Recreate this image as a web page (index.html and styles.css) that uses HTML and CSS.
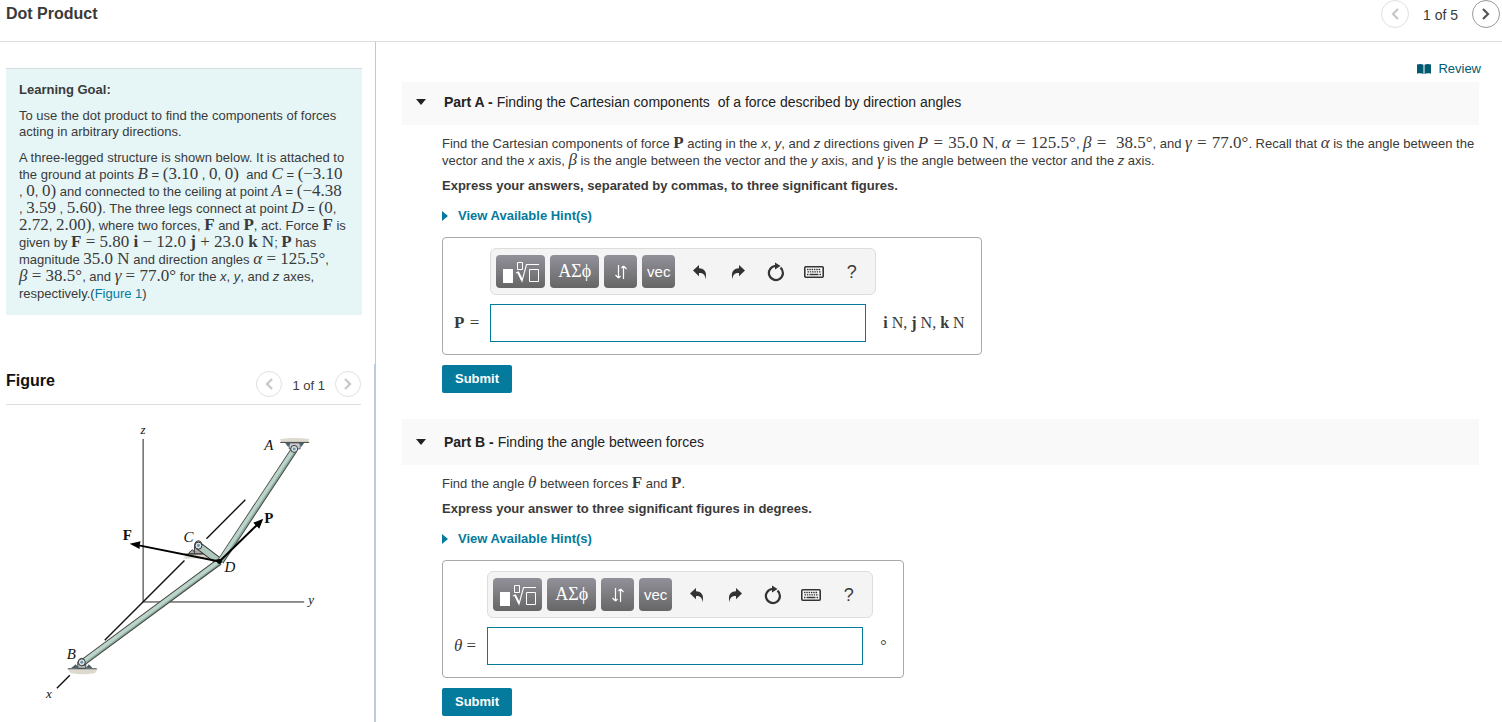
FILE: index.html
```html
<!DOCTYPE html>
<html lang="en">
<head>
<meta charset="utf-8">
<title>Dot Product</title>
<link rel="stylesheet" href="styles.css">
</head>
<body>
<svg class="defs" aria-hidden="true">
  <symbol id="left" viewBox="0 0 10 14"><path d="M8 2 3 7l5 5" fill="none" stroke="currentColor" stroke-width="2.2"/></symbol>
  <symbol id="right" viewBox="0 0 10 14"><path d="m2 2 5 5-5 5" fill="none" stroke="currentColor" stroke-width="2.2"/></symbol>
  <symbol id="root" viewBox="0 0 40 28">
    <rect x="2" y="11" width="10" height="14" fill="#fff"/>
    <path d="M16.500 4.500h5v7h-5zM28.500 11.500h9v12h-9z" fill="none" stroke="#fff"/>
    <path d="M15 15l2-1 4 9L25.500 6.500H38" fill="none" stroke="#fff" stroke-width="1.100"/>
    <path d="M17 14l4 8" stroke="#fff" stroke-width="2"/>
  </symbol>
  <symbol id="arrows" viewBox="0 0 16 16"><path d="M5.500 1v13M2.500 11l3 3M10.500 15V2M10.500 2l3 3M5.500 14l2-2M8.500 4l2-2" fill="none" stroke="#fff" stroke-width="1.200"/></symbol>
  <symbol id="undo" viewBox="0 0 16 16"><path d="M1 6.500 7 1v3.200c5.500.2 8.600 4 6.300 11.300C13.500 10.600 11 8.900 7 9v3.200z" fill="#333"/></symbol>
  <symbol id="redo" viewBox="0 0 16 16"><path d="M15 6.500 9 1v3.200c-5.500.2-8.600 4-6.300 11.300C2.500 10.600 5 8.900 9 9v3.200z" fill="#333"/></symbol>
  <symbol id="reset" viewBox="0 0 18 20"><path d="M13.500 5.700A7 7 0 1 1 8.500 4" fill="none" stroke="#333" stroke-width="2.200"/><path d="M8 .5v7l5.500-3.500z" fill="#333"/></symbol>
  <symbol id="keys" viewBox="0 0 20 12">
    <rect x=".8" y=".8" width="18.400" height="10.400" rx="1" fill="#fff" stroke="#333" stroke-width="1.600"/>
    <path d="M3 3.500h14M3.500 5.800h14" stroke="#333" stroke-width="1.300" stroke-dasharray="1.500 .8"/>
    <path d="M3 8.500h1.500M5.500 8.500h9M15.500 8.500H17" stroke="#333" stroke-width="1.300"/>
  </symbol>
  <symbol id="book" viewBox="0 0 14 10"><path d="M0 .5C2-.2 5-.2 6.500.8V10C5 9.200 2 9.200 0 9.700zM14 .5C12-.2 9-.2 7.500.8V10c1.500-.8 4.500-.8 6.500-.3z" fill="currentColor"/></symbol>
</svg>

<header class="topbar">
  <h1 class="title">Dot Product</h1>
  <nav class="pager" aria-label="Items">
    <button class="round" disabled aria-label="Previous item"><svg><use href="#left"/></svg></button>
    <span class="count">1 of 5</span>
    <button class="round active" aria-label="Next item"><svg><use href="#right"/></svg></button>
  </nav>
</header>

<div class="layout">
  <aside class="side">
    <section class="intro">
      <div class="goal">
        <h2 class="goal-title">Learning Goal:</h2>
        <p class="goal-lead">To use the dot product to find the components of forces acting in arbitrary directions.</p>
        <p class="goal-text">A three-legged structure is shown below. It is attached to<br>
          the ground at points <i class="m">B</i> = <span class="m">(3.10</span> , <span class="m">0</span>, <span class="m">0)</span>&nbsp; and <i class="m">C</i> = <span class="m">(−3.10</span><br>
          , <span class="m">0</span>, <span class="m">0)</span> and connected to the ceiling at point <i class="m">A</i> = <span class="m">(−4.38</span><br>
          , <span class="m">3.59</span> , <span class="m">5.60)</span>. The three legs connect at point <i class="m">D</i> = <span class="m">(0</span>,<br>
          <span class="m">2.72</span>, <span class="m">2.00)</span>, where two forces, <b class="m">F</b> and <b class="m">P</b>, act. Force <b class="m">F</b> is<br>
          given by <span class="m"><b>F</b> <span class="op">=</span> 5.80 <b>i</b> − 12.0 <b>j</b> + 23.0 <b>k</b> N</span>; <b class="m">P</b> has<br>
          magnitude <span class="m">35.0 N</span> and direction angles <span class="m"><i>α</i> <span class="op">=</span> 125.5°</span>,<br>
          <span class="m"><i>β</i> <span class="op">=</span> 38.5°</span>, and <span class="m"><i>γ</i> <span class="op">=</span> 77.0°</span> for the <i>x</i>, <i>y</i>, and <i>z</i> axes,<br>
          respectively.(<a class="link" href="#figure">Figure 1</a>)</p>
      </div>
    </section>
    <section class="figure" id="figure">
      <div class="figure-head">
        <h2 class="figure-title">Figure</h2>
        <nav class="pager" aria-label="Figures">
          <button class="round small" disabled aria-label="Previous figure"><svg><use href="#left"/></svg></button>
          <span class="count">1 of 1</span>
          <button class="round small" disabled aria-label="Next figure"><svg><use href="#right"/></svg></button>
        </nav>
      </div>
      <svg class="drawing" viewBox="0 410 356 300" role="img" aria-label="Three-legged structure with forces F and P at D">
        <g transform="translate(-6 0)">
          <path d="M143.500 438v163.500H305" fill="none" stroke="#222"/>
          <path d="M246 499 207 538M185 560 105 640M70 675 57 688" stroke="#111" stroke-width="1.400"/>
          <path d="M281 438q14-2 29 0l-1 4h-27z" fill="#ddd9ce"/>
          <path d="M281 441.500h29" stroke="#444"/>
          <path d="M290 442h11v6h-11z" fill="#ccc" stroke="#445" stroke-width=".8"/>
          <path d="M286 442l3 4 2-4zM300 442l2 4 3-4z" fill="#47606d"/>
          <path d="M190 550h16l10 8h-32z" fill="#ddd9ce"/>
          <path d="M185 553.500h28" stroke="#444"/>
          <path d="M189 553l4-4 3 4zM195 553v-9q1-4 4-4t4 5v8z" fill="#aaa" stroke="#444"/>
          <path d="M199 545 220 561" stroke="#333" stroke-width="8"/>
          <path d="M199 545 220 561" stroke="#afcabc" stroke-width="6"/>
          <path d="M68 669h30l-3 4q-12 2-24 0z" fill="#ddd9ce"/>
          <path d="M68 668.500h29" stroke="#444"/>
          <path d="M71 668l5-4 3 4zM86 668l3-4 4 4z" fill="#47606d"/>
          <path d="M78 668v-6q1-4 4-4t4 4v6z" fill="#bbb" stroke="#444"/>
          <path d="M82 663 220 561" stroke="#444" stroke-width="7"/>
          <path d="M82 663 220 561" stroke="#8daf9f" stroke-width="5"/>
          <path d="M82 662 219 561" stroke="#bcd4c9" stroke-width="3.500"/>
          <path d="M295 449 221 561" stroke="#444" stroke-width="7"/>
          <path d="M295 449 221 561" stroke="#8daf9f" stroke-width="5"/>
          <path d="M294 449 220 561" stroke="#bcd4c9" stroke-width="3.500"/>
          <g fill="#dce6ea" stroke="#333"><circle cx="199" cy="545" r="3.500"/><circle cx="82" cy="662" r="3.500"/><circle cx="295" cy="448" r="3.500"/></g>
          <g fill="#6a96a8"><circle cx="199" cy="545" r="1.500"/><circle cx="82" cy="662" r="1.500"/><circle cx="295" cy="448" r="1.500"/></g>
          <path d="M220 561 138 544.500M220 561l38-37" stroke="#000" stroke-width="2"/>
          <path d="M130 543l11-2.500-1 4 0 4zM264 518l-4 10-3-3-3-3z" fill="#000"/>
          <circle cx="220" cy="561" r="2.500"/>
          <g class="fig-text">
            <text x="141" y="433" class="axis">z</text><text x="309" y="604" class="axis">y</text><text x="46" y="698" class="axis">x</text>
            <text x="265" y="449">A</text><text x="184" y="541">C</text><text x="225" y="571">D</text><text x="67" y="659">B</text>
            <text x="123" y="539" class="force">F</text><text x="265" y="522" class="force">P</text>
          </g>
        </g>
      </svg>
    </section>
  </aside>

  <main class="content">
    <div class="review"><a href="#review"><svg><use href="#book"/></svg>Review</a></div>

    <section class="part first">
      <h2 class="part-head"><button class="toggle" aria-expanded="true"><span class="caret"></span><span><b>Part A -</b> Finding the Cartesian components&nbsp; of a force described by direction angles</span></button></h2>
      <div class="part-body">
        <p class="question">Find the Cartesian components of force <b class="m">P</b> acting in the <i>x</i>, <i>y</i>, and <i>z</i> directions given <span class="m"><i>P</i> <span class="op">=</span> 35.0 N</span>, <span class="m"><i>α</i> <span class="op">=</span> 125.5°</span>, <span class="m"><i>β</i> <span class="op">=</span>&nbsp; 38.5°</span>, and <span class="m"><i>γ</i> <span class="op">=</span> 77.0°</span>. Recall that <i class="m">α</i> is the angle between the vector and the <i>x</i> axis, <i class="m">β</i> is the angle between the vector and the <i>y</i> axis, and <i class="m">γ</i> is the angle between the vector and the <i>z</i> axis.</p>
        <p class="instruction">Express your answers, separated by commas, to three significant figures.</p>
        <button class="hints"><span class="tri"></span>View Available Hint(s)</button>
        <form class="answer">
          <div class="tools" role="toolbar" aria-label="Equation tools">
            <button type="button" class="key wide" aria-label="Templates"><svg class="i-root"><use href="#root"/></svg></button>
            <button type="button" class="key wide greek">ΑΣϕ</button>
            <button type="button" class="key" aria-label="Subscripts"><svg class="i-arrows"><use href="#arrows"/></svg></button>
            <button type="button" class="key vec">vec</button>
            <button type="button" class="tool" aria-label="Undo"><svg class="i-turn"><use href="#undo"/></svg></button>
            <button type="button" class="tool" aria-label="Redo"><svg class="i-turn"><use href="#redo"/></svg></button>
            <button type="button" class="tool" aria-label="Reset"><svg class="i-reset"><use href="#reset"/></svg></button>
            <button type="button" class="tool" aria-label="Keyboard"><svg class="i-keys"><use href="#keys"/></svg></button>
            <button type="button" class="tool help">?</button>
          </div>
          <label class="lhs" for="ans-a"><b>P</b> <span class="op">=</span></label>
          <input class="field" id="ans-a" type="text">
          <span class="unit"><b>i</b> N, <b>j</b> N, <b>k</b> N</span>
        </form>
        <button class="submit">Submit</button>
      </div>
    </section>

    <section class="part">
      <h2 class="part-head"><button class="toggle" aria-expanded="true"><span class="caret"></span><span><b>Part B -</b> Finding the angle between forces</span></button></h2>
      <div class="part-body">
        <p class="question">Find the angle <i class="m">θ</i> between forces <b class="m">F</b> and <b class="m">P</b>.</p>
        <p class="instruction">Express your answer to three significant figures in degrees.</p>
        <button class="hints"><span class="tri"></span>View Available Hint(s)</button>
        <form class="answer">
          <div class="tools" role="toolbar" aria-label="Equation tools">
            <button type="button" class="key wide" aria-label="Templates"><svg class="i-root"><use href="#root"/></svg></button>
            <button type="button" class="key wide greek">ΑΣϕ</button>
            <button type="button" class="key" aria-label="Subscripts"><svg class="i-arrows"><use href="#arrows"/></svg></button>
            <button type="button" class="key vec">vec</button>
            <button type="button" class="tool" aria-label="Undo"><svg class="i-turn"><use href="#undo"/></svg></button>
            <button type="button" class="tool" aria-label="Redo"><svg class="i-turn"><use href="#redo"/></svg></button>
            <button type="button" class="tool" aria-label="Reset"><svg class="i-reset"><use href="#reset"/></svg></button>
            <button type="button" class="tool" aria-label="Keyboard"><svg class="i-keys"><use href="#keys"/></svg></button>
            <button type="button" class="tool help">?</button>
          </div>
          <label class="lhs" for="ans-b"><i>θ</i> =</label>
          <input class="field" id="ans-b" type="text">
          <span class="unit">°</span>
        </form>
        <button class="submit">Submit</button>
      </div>
    </section>
  </main>
</div>
</body>
</html>
```
FILE: styles.css
```css
* { box-sizing: border-box; }
body {
  margin: 0;
  min-height: 100vh;
  display: flex;
  flex-direction: column;
  background: #fff;
  color: #3a3a3a;
  font: 13px/16px "Liberation Sans", Arial, sans-serif;
}
h1, h2, p { margin: 0; }
button { font: inherit; color: inherit; padding: 0; border: 0; background: none; }
a { color: #047a9c; text-decoration: none; }
.defs { position: absolute; width: 0; height: 0; }

.topbar {
  display: flex;
  justify-content: space-between;
  height: 42px;
  padding: 0 2px 0 6px;
  border-bottom: 1px solid #ddd;
}
.title { padding-top: 4px; font-size: 16px; line-height: 20px; }
.pager { display: flex; align-items: flex-start; }
.topbar .count { padding: 7px 14px 0; font-size: 14px; }
.round {
  display: flex;
  align-items: center;
  justify-content: center;
  width: 28px;
  height: 28px;
  border: 1px solid #e0e0e0;
  border-radius: 50%;
  color: #c7c7c7;
}
.round svg { width: 10px; height: 14px; }
.round.active { border-color: #999; color: #555; }
.round.small { width: 26px; height: 26px; }

.layout { flex: 1; display: flex; }
.side { flex: 0 0 376px; display: flex; flex-direction: column; }
.intro { padding: 26px 13px 49px 6px; border-right: 1px solid #c0c8d0; }
.goal { padding: 13px; border-top: 1px solid #d5dddd; background: #e6f6f6; }
.goal-title { font-size: 13px; line-height: 16px; margin-bottom: 10px; }
.goal-lead { margin-bottom: 9px; }
.goal-text { line-height: 17px; white-space: nowrap; }
.m, .lhs, .unit { font-family: "Liberation Serif", "DejaVu Serif", serif; }
.m { font-size: 17px; line-height: 16px; white-space: nowrap; }
.question .op { padding: 0 1px; }
.lhs .op { padding-left: 1px; }

.figure { flex: 1; padding: 7px 13px 0 6px; border-right: 2px solid #b9cbdd; }
.figure-head { display: flex; justify-content: space-between; height: 34px; border-bottom: 1px solid #ddd; }
.figure-title { font-size: 16px; line-height: 20px; color: #111; }
.figure .count { padding: 7px 10px 0; }
.drawing { display: block; width: 100%; max-width: 356px; margin-top: 6px; }
.fig-text { font: italic 15px "Liberation Serif", serif; fill: #111; }
.fig-text .axis { font-size: 13px; }
.fig-text .force { font-style: normal; font-weight: bold; }

.content { flex: 1; padding: 19px 23px 0 26px; }
.review { display: flex; justify-content: flex-end; margin: 0 -2px 5px 0; }
.review a { display: flex; align-items: center; gap: 7px; color: #005a70; }
.review svg { width: 14px; height: 10px; }
.part { margin-bottom: 26px; }
.part-head { display: flex; align-items: center; height: 46px; background: #f9f9f9; color: #222; font-weight: normal; }
.first .part-head { height: 43px; padding-bottom: 3px; }
.toggle { display: flex; align-items: center; gap: 18px; padding-left: 14px; font-size: 14px; }
.caret { border: 5px solid transparent; border-top: 6px solid #222; border-bottom: 0; }
.part-body { padding: 10px 0 0 40px; }
.question { margin-bottom: 9px; }
.instruction { font-weight: bold; margin-bottom: 14px; }
.hints { display: flex; align-items: center; gap: 10px; height: 16px; margin-bottom: 13px; color: #047a9c; font-weight: bold; }
.tri { border: 5px solid transparent; border-left: 6px solid #047a9c; border-right: 0; }

.answer {
  display: grid;
  grid-template-columns: auto 386px auto;
  align-items: center;
  width: max-content;
  row-gap: 9px;
  padding: 10px 16px 12px 11px;
  border: 1px solid #aaa;
  border-radius: 4px;
}
.tools {
  grid-column: 2;
  display: flex;
  align-items: center;
  gap: 5px;
  height: 47px;
  padding: 0 5px;
  border: 1px solid #ddd;
  border-radius: 6px;
  background: #f4f4f4;
}
.key {
  display: flex;
  align-items: center;
  justify-content: center;
  width: 33px;
  height: 33px;
  border-radius: 4px;
  background: linear-gradient(#92919a, #666);
  color: #fff;
}
.wide { width: 49px; }
.greek { font: 18px "Liberation Serif", serif; }
.vec { font-size: 15px; }
.tool { display: flex; align-items: center; justify-content: center; width: 33px; height: 33px; }
.vec + .tool { margin-left: 3px; }
.help { font-size: 18px; }
.i-root { width: 40px; height: 28px; }
.i-arrows { width: 16px; height: 16px; }
.i-turn { width: 16px; height: 16px; }
.i-reset { width: 18px; height: 20px; }
.i-keys { width: 20px; height: 12px; }
.lhs { grid-column: 1; padding-right: 11px; font-size: 17px; }
.field { width: 376px; height: 38px; border: 1px solid #047a9c; border-radius: 0; padding: 0 8px; font: inherit; }
.unit { padding-left: 7px; font-size: 16px; }
.submit {
  width: 70px;
  height: 28px;
  margin-top: 10px;
  border-radius: 2px;
  background: #047a9c;
  color: #fff;
  font-weight: bold;
}
```
